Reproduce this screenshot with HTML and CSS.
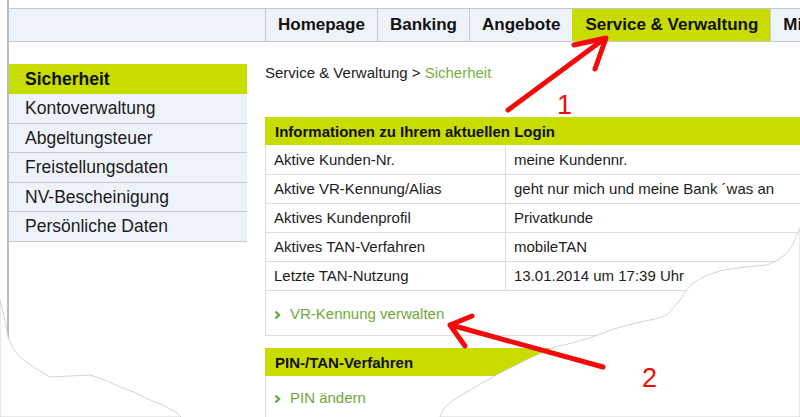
FILE: index.html
```html
<html>
<head>
<title>Sicherheit</title>
<link rel="stylesheet" href="styles.css">
</head>
<body>

<div class="page">

  <div class="topnav">
    <a class="tab">Homepage</a>
    <a class="tab">Banking</a>
    <a class="tab">Angebote</a>
    <a class="tab active">Service &amp; Verwaltung</a>
    <a class="tab">Mi</a>
  </div>

  <div class="main">

    <div class="sidebar">
      <div class="side-head">Sicherheit</div>
      <a class="side-item">Kontoverwaltung</a>
      <a class="side-item">Abgeltungsteuer</a>
      <a class="side-item">Freistellungsdaten</a>
      <a class="side-item">NV-Bescheinigung</a>
      <a class="side-item">Persönliche Daten</a>
    </div>

    <div class="content">

      <p class="crumb">Service &amp; Verwaltung &gt; <a>Sicherheit</a></p>

      <div class="box">
        <div class="box-head">Informationen zu Ihrem aktuellen Login</div>
        <table class="info">
          <tr><td class="key">Aktive Kunden-Nr.</td><td>meine Kundennr.</td></tr>
          <tr><td class="key">Aktive VR-Kennung/Alias</td><td>geht nur mich und meine Bank ´was an</td></tr>
          <tr><td class="key">Aktives Kundenprofil</td><td>Privatkunde</td></tr>
          <tr><td class="key">Aktives TAN-Verfahren</td><td>mobileTAN</td></tr>
          <tr><td class="key">Letzte TAN-Nutzung</td><td>13.01.2014 um 17:39 Uhr</td></tr>
        </table>
        <div class="box-links">
          <a class="more"><svg class="chev" width="7" height="10" viewBox="0 0 7 10"><path d="M1.5 1.5 L5 5 L1.5 8.5" /></svg>VR-Kennung verwalten</a>
        </div>
      </div>

      <div class="box open">
        <div class="box-head">PIN-/TAN-Verfahren</div>
        <div class="box-links first">
          <a class="more"><svg class="chev" width="7" height="10" viewBox="0 0 7 10"><path d="M1.5 1.5 L5 5 L1.5 8.5" /></svg>PIN ändern</a>
        </div>
      </div>

    </div>

  </div>

</div>

<!-- torn paper edges and the red hints drawn on top of the screenshot -->
<svg class="marks" width="800" height="417" viewBox="0 0 800 417">
  <path class="tear" d="M800 228 L797 235 L792 246 L787 253 L778 260 L767 265 L745 267 L723 270 L705 276 L693 283 L685 292 L680 300 L672 309 L667 315 L655 319 L640 322 L617 328 L592 337 L572 343 L555 347 L530 358 L500 373 L470 390 L452 401 L444 408 L440 417 L800 417 Z" />
  <path class="tear" d="M0 300 L3 312 L6 326 L8 337 L13 348 L20 357 L35 368 L50 377 L70 376 L90 375 L105 380 L120 387 L136 393 L150 400 L165 406 L177 413 L181 417 L0 417 Z" />

  <line class="arrow" x1="508" y1="110" x2="604" y2="39" />
  <polyline class="arrow" points="574,45 606,38 595,69" />
  <text class="hint" x="557" y="114">1</text>

  <line class="arrow" x1="603" y1="367" x2="451" y2="325" />
  <polyline class="arrow" points="472,316 450,325 465,346" />
  <text class="hint" x="642" y="387">2</text>
</svg>

</body>
</html>
```

FILE: styles.css
```css
html, body {
   margin: 0;
   padding: 0; }

body {
   width: 800px;
   height: 417px;
   overflow: hidden;
   position: relative;
   background: #fff;
   font-family: "Liberation Sans", Arial, sans-serif;
   color: #1a1a1a; }

a {
   text-decoration: none;
   color: inherit; }

.page {
   margin-left: 7px;
   padding-top: 8px;
   height: 409px;
   border-left: 2px solid #b9bcc1;
   width: 1000px; }

/* top navigation */

.topnav {
   display: flex;
   height: 32px;
   padding-left: 256px;
   background: #eef2f9;
   border-top: 1px solid #c3c6cb;
   border-bottom: 1px solid #c3c6cb; }

.tab {
   padding: 0 12px 0 12px;
   line-height: 32px;
   font-size: 17px;
   font-weight: bold;
   color: #111;
   border-left: 1px solid #c8ccd1;
   white-space: nowrap; }

.tab.active {
   background: #c8dc00;
   border-left-color: #c8dc00; }

/* sidebar */

.main {
   display: flex;
   align-items: flex-start; }

.sidebar {
   width: 238px;
   margin-top: 22px;
   display: flex;
   flex-direction: column; }

.side-head {
   background: #c8dc00;
   height: 30px;
   line-height: 30px;
   padding-left: 16px;
   font-size: 17.5px;
   font-weight: bold;
   color: #111; }

.side-item {
   background: #eef2f9;
   height: 28.6px;
   line-height: 28.6px;
   padding-left: 16px;
   font-size: 17.5px;
   color: #1c1c1c;
   border-bottom: 1px solid #c5c8cd; }

/* content */

.content {
   margin-left: 18px;
   padding-top: 22px;
   width: 700px; }

.crumb {
   margin: 0 0 35px 0;
   line-height: 18px;
   font-size: 15px;
   color: #222; }

.crumb a {
   color: #76b042; }

.box {
   border-left: 1px solid #dcdcdc;
   border-bottom: 1px solid #dcdcdc;
   margin-bottom: 12px; }

.box.open {
   border-bottom: none; }

.box-head {
   background: #c8dc00;
   height: 28px;
   line-height: 29px;
   margin-left: -1px;
   padding-left: 10px;
   font-size: 15px;
   font-weight: bold;
   color: #111; }

.info {
   border-collapse: collapse;
   width: 100%; }

.info td {
   height: 29px;
   padding: 0 0 0 8px;
   font-size: 15px;
   color: #1c1c1c;
   border-bottom: 1px solid #dedede; }

.info td.key {
   width: 231px;
   border-right: 1px solid #dedede; }

.box-links {
   padding: 13px 0 11px 8px;
   line-height: 20px; }

.box-links.first {
   padding-top: 12px; }

.more {
   display: flex;
   align-items: center;
   font-size: 15px;
   color: #6fa83a; }

.chev {
   margin-right: 9px;
   margin-top: 2px; }

.chev path {
   fill: none;
   stroke: #6fa83a;
   stroke-width: 2.4; }

/* overlay */

.marks {
   position: absolute;
   top: 0;
   left: 0;
   pointer-events: none; }

.tear {
   fill: #fff;
   stroke: #c9c9c9;
   stroke-width: 0.8; }

.arrow {
   fill: none;
   stroke: #f50a0a;
   stroke-width: 5;
   stroke-linecap: round;
   stroke-linejoin: round; }

.hint {
   font-family: "Liberation Sans", Arial, sans-serif;
   font-size: 27px;
   fill: #f50a0a; }
```
